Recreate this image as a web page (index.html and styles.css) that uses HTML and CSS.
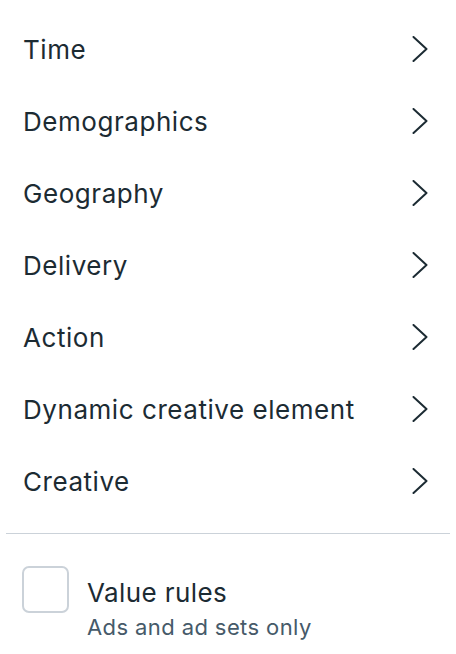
FILE: index.html
```html
<!DOCTYPE html>
<html lang="en">
<head>
    <meta charset="UTF-8">
    <title>Breakdown</title>
    <link rel="stylesheet" href="styles.css">
</head>
<body>
    <div class="panel">
        <ul class="menu">
            <li class="menu-item"><span>Time</span><svg class="chevron" viewBox="0 0 16 26"><path d="M1.5 1 L14.5 13 L1.5 25"/></svg></li>
            <li class="menu-item"><span>Demographics</span><svg class="chevron" viewBox="0 0 16 26"><path d="M1.5 1 L14.5 13 L1.5 25"/></svg></li>
            <li class="menu-item"><span>Geography</span><svg class="chevron" viewBox="0 0 16 26"><path d="M1.5 1 L14.5 13 L1.5 25"/></svg></li>
            <li class="menu-item"><span>Delivery</span><svg class="chevron" viewBox="0 0 16 26"><path d="M1.5 1 L14.5 13 L1.5 25"/></svg></li>
            <li class="menu-item"><span>Action</span><svg class="chevron" viewBox="0 0 16 26"><path d="M1.5 1 L14.5 13 L1.5 25"/></svg></li>
            <li class="menu-item"><span>Dynamic creative element</span><svg class="chevron" viewBox="0 0 16 26"><path d="M1.5 1 L14.5 13 L1.5 25"/></svg></li>
            <li class="menu-item"><span>Creative</span><svg class="chevron" viewBox="0 0 16 26"><path d="M1.5 1 L14.5 13 L1.5 25"/></svg></li>
        </ul>

        <div class="divider"></div>

        <label class="option">
            <span class="checkbox"></span>
            <span class="option-text">
                <span class="option-title">Value rules</span>
                <span class="option-sub">Ads and ad sets only</span>
            </span>
        </label>
    </div>
</body>
</html>
```

FILE: styles.css
```css
body, ul, li, div, span {
    margin: 0;
    padding: 0;
    box-sizing: border-box;
}

body {
    background-color: #ffffff;
    font-family: Inter, 'Noto Sans', sans-serif;
    color: #1c2b33;
}

.panel {
    width: 456px;
    padding: 13px 6px 0 6px;
}

.menu {
    list-style: none;
}

.menu-item {
    display: flex;
    justify-content: space-between;
    align-items: center;
    height: 72px;
    padding: 0 22px 0 17px;
    font-size: 26px;
    letter-spacing: 0.55px;
}

.chevron {
    width: 16px;
    height: 26px;
    fill: none;
    stroke: #1c2b33;
    stroke-width: 2;
    stroke-linecap: round;
    stroke-linejoin: round;
}

.divider {
    height: 1px;
    background-color: #cbd2d9;
    margin-top: 16px;
}

.option {
    display: flex;
    align-items: flex-start;
    gap: 18px;
    padding: 32px 0 0 16px;
}

.checkbox {
    width: 47px;
    height: 47px;
    border: 2px solid #cbd2d9;
    border-radius: 7px;
}

.option-text {
    display: flex;
    flex-direction: column;
    padding-top: 11px;
}

.option-title {
    font-size: 26px;
    line-height: 32px;
    letter-spacing: 0.4px;
}

.option-sub {
    font-size: 22px;
    line-height: 34px;
    margin-top: 1px;
    letter-spacing: 0.4px;
    color: #465a69;
}
```
